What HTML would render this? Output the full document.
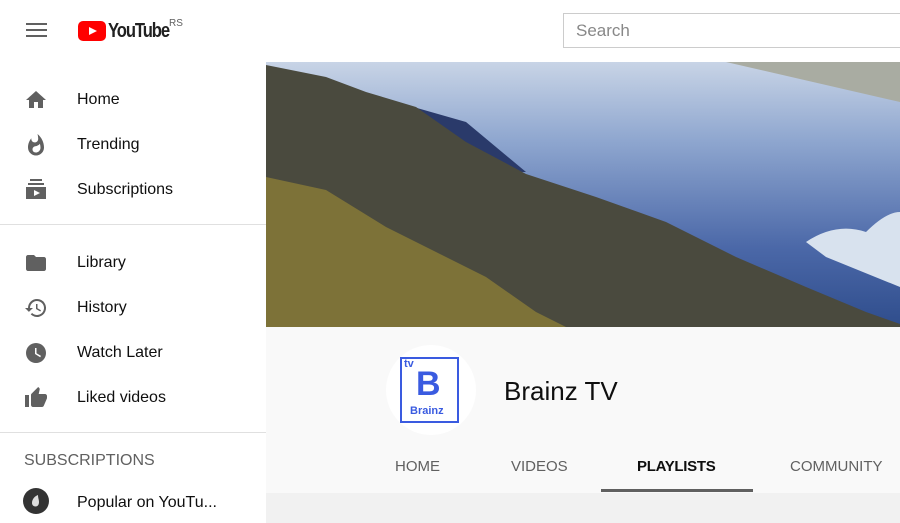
<!DOCTYPE html>
<html><head><style>
*{margin:0;padding:0;box-sizing:border-box}
body{width:900px;height:523px;overflow:hidden;background:#f9f9f9;font-family:"Liberation Sans",Arial,sans-serif;position:relative}
.side{position:absolute;left:0;top:0;width:266px;height:523px;background:#fff}
.top{position:absolute;left:0;top:0;width:900px;height:62px;background:#fff}
.item{position:absolute;left:0;width:266px;height:40px;font-size:16px;color:#0f0f0f}
.item svg{position:absolute;left:24px;top:8px}
.item span{position:absolute;left:77px;top:11px}
.hr{position:absolute;left:0;width:266px;height:1px;background:#e0e0e0}
.tab{position:absolute;top:458px;font-size:15px;color:#606060}
</style></head><body>
<div class="top"></div>
<div class="side"></div>
<svg style="position:absolute;left:26px;top:23px" width="22" height="16"><rect y="0" width="21" height="2" fill="#606060"/><rect y="6" width="21" height="2" fill="#606060"/><rect y="12" width="21" height="2" fill="#606060"/></svg>
<svg style="position:absolute;left:78px;top:21px" width="28" height="20"><rect width="28" height="20" rx="5" fill="#f00"/><path d="M11 6 L19 10 L11 14Z" fill="#fff"/></svg>
<div style="position:absolute;left:108px;top:20px;font-size:20px;font-weight:bold;letter-spacing:-1.3px;color:#212121;transform:scaleX(0.83);transform-origin:left">YouTube</div>
<div style="position:absolute;left:169px;top:18px;font-size:10px;color:#606060">RS</div>
<div style="position:absolute;left:563px;top:13px;width:345px;height:35px;border:1px solid #ccc;background:#fff;font-size:17px;color:#888;padding:7px 0 0 12px">Search</div>

<div class="item" style="top:80px"><svg width="24" height="24" viewBox="0 0 24 24"><path d="M10 20v-6h4v6h5v-8h3L12 3 2 12h3v8z" fill="#606060"/></svg><span>Home</span></div>
<div class="item" style="top:125px"><svg width="24" height="24" viewBox="0 0 24 24"><path d="M13.5 1s.7 2.6.7 4.7c0 2-1.3 3.7-3.4 3.7-2 0-3.5-1.6-3.5-3.7l0-.4C5.3 7.8 4 11 4 14.5 4 18.9 7.6 22.5 12 22.5s8-3.6 8-8C20 9.1 17.4 4.3 13.5 1zM11.7 19.5c-1.8 0-3.2-1.4-3.2-3.1 0-1.6 1-2.7 2.8-3.1 1.8-.4 3.6-1.2 4.6-2.6.4 1.3.6 2.6.6 4 0 2.6-2.1 4.8-4.8 4.8z" fill="#606060"/></svg><span>Trending</span></div>
<div class="item" style="top:170px"><svg width="24" height="24" viewBox="0 0 24 24"><path d="M18 1H6v2h12zM20 5H4v2h16zM22 9H2v12h20zM10 12l6 3-6 3z" fill="#606060"/></svg><span>Subscriptions</span></div>
<div class="hr" style="top:224px"></div>
<div class="item" style="top:243px"><svg width="24" height="24" viewBox="0 0 24 24"><path d="M10 4H4c-1.1 0-2 .9-2 2v12c0 1.1.9 2 2 2h16c1.1 0 2-.9 2-2V8c0-1.1-.9-2-2-2h-8l-2-2z" fill="#606060"/></svg><span>Library</span></div>
<div class="item" style="top:288px"><svg width="24" height="24" viewBox="0 0 24 24"><path d="M13 3a9 9 0 0 0-9 9H1l3.9 3.9L9 12H6a7 7 0 1 1 2.1 5l-1.4 1.4A9 9 0 1 0 13 3zm-1 5v5l4.3 2.5.7-1.2-3.5-2.1V8z" fill="#606060"/></svg><span>History</span></div>
<div class="item" style="top:333px"><svg width="24" height="24" viewBox="0 0 24 24"><path d="M12 2a10 10 0 1 0 0 20 10 10 0 0 0 0-20zm4.2 14.2L11 13V7h1.5v5.2l4.5 2.7z" fill="#606060"/></svg><span>Watch Later</span></div>
<div class="item" style="top:378px"><svg width="24" height="24" viewBox="0 0 24 24"><path d="M1 21h4V9H1zm22-11c0-1.1-.9-2-2-2h-6.3l1-4.6v-.3c0-.4-.2-.8-.4-1.1L14.2 1 7.6 7.6C7.2 7.9 7 8.4 7 9v10c0 1.1.9 2 2 2h9c.8 0 1.5-.5 1.8-1.2l3-7.1c.1-.2.2-.5.2-.7z" fill="#606060"/></svg><span>Liked videos</span></div>
<div class="hr" style="top:432px"></div>
<div style="position:absolute;left:24px;top:452px;font-size:16px;color:#606060">SUBSCRIPTIONS</div>
<div class="item" style="top:483px"><svg width="26" height="26" viewBox="0 0 26 26" style="left:23px;top:5px"><circle cx="13" cy="13" r="13" fill="#333"/><path d="M15 7c-3 1-6 4-6 8 0 2 1.5 3.5 3.5 3.5S16 17 16 14c0-2.5-1-4-1-7z" fill="#ddd"/></svg><span>Popular on YouTu...</span></div>

<svg style="position:absolute;left:266px;top:62px" width="634" height="265" viewBox="0 0 634 265">
<defs><linearGradient id="g" x1="0" y1="0" x2="0" y2="1"><stop offset="0" stop-color="#c8d4e6"/><stop offset=".3" stop-color="#8ea6cf"/><stop offset=".7" stop-color="#4b68a8"/><stop offset="1" stop-color="#2f4d8c"/></linearGradient></defs>
<rect width="634" height="265" fill="url(#g)"/>
<path d="M460 0L634 0 634 40Z" fill="#a9aca2"/>
<path d="M540 180Q570 160 600 170 620 150 634 150L634 225 560 195Z" fill="#d8e2ee"/>
<path d="M130 40L200 60 260 110 190 110Z" fill="#2a3a6a"/>
<path d="M0 3L60 15 100 30 150 45 200 80 260 112 330 135 400 160 470 195 540 225 600 250 634 262 634 265 0 265Z" fill="#4a4a3e"/>
<path d="M0 115L60 128 120 165 170 190 220 215 270 250 300 265 0 265Z" fill="#7d7238"/>
</svg>

<div style="position:absolute;left:266px;top:493px;width:634px;height:30px;background:#f1f1f1"></div>
<div style="position:absolute;left:386px;top:345px;width:90px;height:90px;border-radius:50%;background:#fff"></div>
<div style="position:absolute;left:400px;top:357px;width:59px;height:66px;border:2px solid #3a5be0;color:#3a5be0;font-weight:bold">
<div style="position:absolute;left:2px;top:-1px;font-size:11px">tv</div>
<div style="position:absolute;left:14px;top:8px;font-size:34px;line-height:34px">B</div>
<div style="position:absolute;left:8px;top:46px;font-size:11px">Brainz</div></div>
<div style="position:absolute;left:504px;top:376px;font-size:26px;color:#0f0f0f">Brainz TV</div>
<div class="tab" style="left:395px">HOME</div>
<div class="tab" style="left:511px">VIDEOS</div>
<div class="tab" style="left:637px;color:#0f0f0f;font-weight:bold;letter-spacing:-0.3px">PLAYLISTS</div>
<div class="tab" style="left:790px">COMMUNITY</div>
<div style="position:absolute;left:601px;top:489px;width:152px;height:3px;background:#606060"></div>
</body></html>
